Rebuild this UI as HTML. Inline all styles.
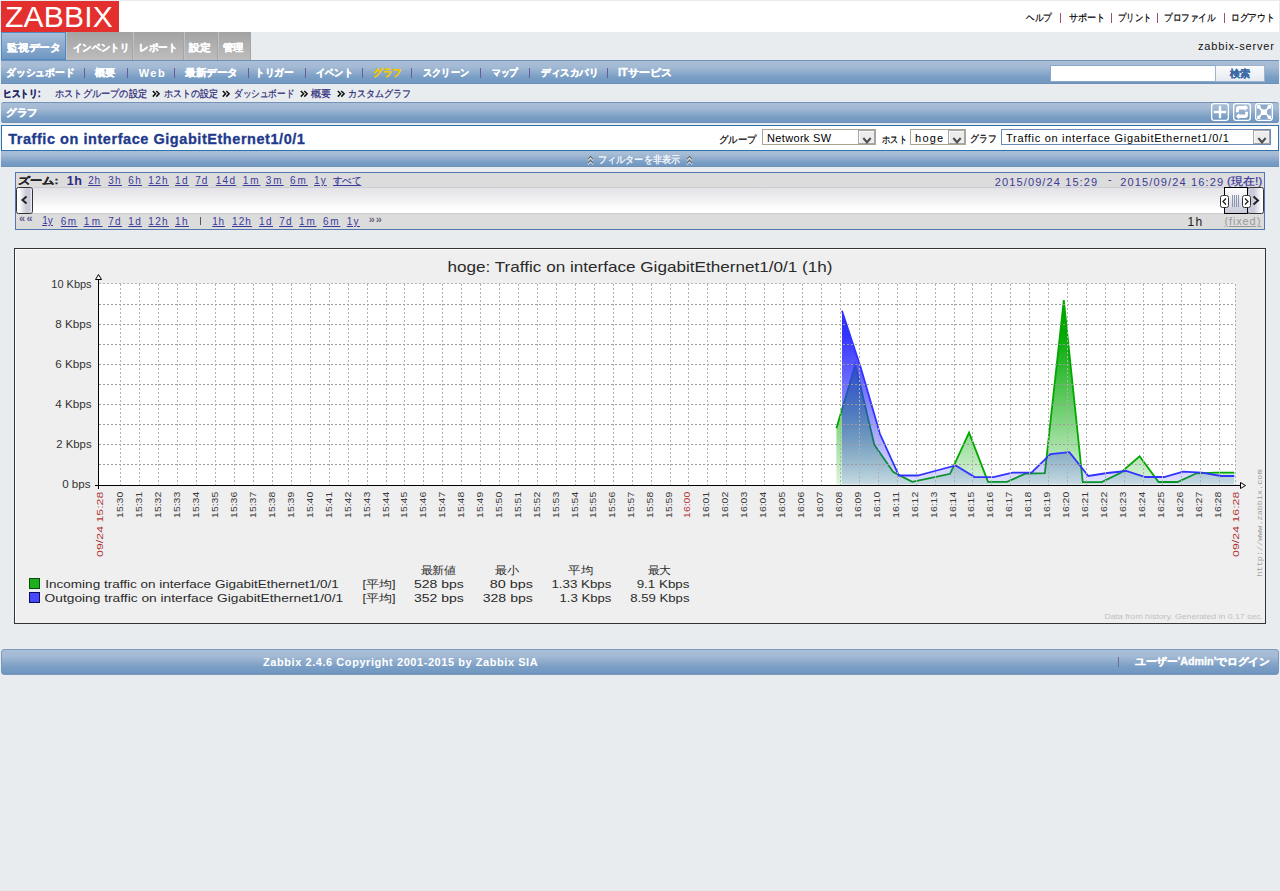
<!DOCTYPE html>
<html lang="ja">
<head>
<meta charset="utf-8">
<title>Zabbix graph</title>
<style>
*{box-sizing:border-box;margin:0;padding:0}
html,body{width:1280px;height:891px;overflow:hidden}
body{position:relative;background:#e9ecef;font-family:"Liberation Sans",sans-serif;font-size:11px;color:#000}
.a{position:absolute;white-space:nowrap}
.t{position:absolute;white-space:nowrap;line-height:1}
.bluebar{background:linear-gradient(#a9bed7,#a4bad4 25%,#7a9ec5 70%,#6f97c1);box-shadow:inset 0 -1px 0 #6f8fb5}
#hdr{left:1px;top:1px;width:1278px;height:31px;background:#fff}
#logo{left:1px;top:1px;width:118px;height:31px;background:#e3302f;color:#fff;font-size:30px;line-height:31px;padding-left:4px;letter-spacing:0.2px}
.gtab{top:32px;height:28px;background:linear-gradient(#a3a3a3,#bdbdbd);border-left:1px solid #c2c2c2;border-right:1px solid #a4a4a4}
.atab{top:32px;height:28px;background:linear-gradient(#a8bed8,#6f97c2);border:1px solid #4e8bc6}
#sub{left:1px;top:60px;width:1278px;height:24px;border-top:1px solid #7290b6}
#ghdr{left:1px;top:102px;width:1278px;height:21px;border-radius:3px;border-top:1px solid #7593b8}
#tbox{left:1px;top:125px;width:1278px;height:26px;background:#fff;border:1px solid #2f72b0}
#fbar{left:1px;top:151px;width:1278px;height:16px}
#tline{left:15px;top:172px;width:1250px;height:58px;border:1px solid #5577b0;background:#fff}
#footer{left:1px;top:649px;width:1278px;height:26px;border-radius:3px;border:1px solid #7b9abf}
#chart{position:absolute;left:14px;top:248px}
.gl{font-family:"Liberation Sans",sans-serif;font-size:10.5px;fill:#333}
.gx{font-family:"Liberation Sans",sans-serif;font-size:9.6px;fill:#3a3a3a}
.gx.red{fill:#b03a3a}
.wm{font-family:"Liberation Mono",monospace;font-size:8px;fill:#a0a0a0}
.gt{font-family:"Liberation Sans",sans-serif;font-size:14.5px;fill:#2a2a2a}
.lg{font-family:"Liberation Sans",sans-serif;font-size:10.6px;fill:#2a2a2a}
.gen{font-family:"Liberation Sans",sans-serif;font-size:8px;fill:#c0c0c0}
.sel{height:16px;background:#fff;border:1px solid #a8a690}
.sel .btn{position:absolute;right:0;top:0;width:17px;height:14px;background:#ececec;border:1px solid #a4a8ac;box-shadow:inset 1px 1px 0 #fafafa}
.sel .btn svg{position:absolute;left:3px;top:5px}
</style>
</head>
<body>
<div class="a" id="hdr"></div>
<div class="a" id="logo">ZABBIX</div>

<div class="a atab" style="left:1px;width:65px"></div>
<div class="a gtab" style="left:66px;width:67px"></div>
<div class="a gtab" style="left:133px;width:51px"></div>
<div class="a gtab" style="left:184px;width:34px"></div>
<div class="a gtab" style="left:218px;width:33px"></div>

<div class="a bluebar" id="sub"></div>
<div class="a" style="left:1050px;top:65px;width:166px;height:17px;background:#fff;border:1px solid #8aa6c8"></div>
<div class="a" style="left:1215px;top:65px;width:50px;height:17px;background:linear-gradient(#fbfbfb,#e6ebf1);border:1px solid #9db3cf"></div>

<div class="a bluebar" id="ghdr"></div>
<svg class="a" style="left:1211px;top:103px" width="62" height="18" viewBox="0 0 62 18">
<g fill="none" stroke="#fff" stroke-width="1.3">
<rect x="0.65" y="0.65" width="16.7" height="16.7" rx="2.5"/>
<rect x="22.65" y="0.65" width="16.7" height="16.7" rx="2.5"/>
<rect x="44.65" y="0.65" width="16.7" height="16.7" rx="2.5"/>
</g>
<g fill="#fff">
<rect x="2.8" y="7.8" width="12.4" height="2.4"/><rect x="7.8" y="2.8" width="2.4" height="12.4"/>
<path d="M25 9.2V6Q25 3 28 3H33.8V1.6L37.2 4.75L33.8 7.9V6.5H27.8V9.2Z"/>
<path d="M37 8.8V12Q37 15 34 15H28.2V16.4L24.8 13.25L28.2 10.1V11.5H34.2V8.8Z"/>
</g>
<g>
<clipPath id="fsc"><rect x="46.1" y="2" width="14" height="14"/></clipPath>
<rect x="46.2" y="2.1" width="13.8" height="13.8" fill="#fff"/>
<g clip-path="url(#fsc)" fill="#8eabcc">
<ellipse cx="53" cy="2" rx="3.8" ry="4.8"/>
<ellipse cx="53" cy="16" rx="3.8" ry="4.8" fill="#84a3c7"/>
<ellipse cx="46.1" cy="9.1" rx="3.8" ry="3.7"/>
<ellipse cx="60.1" cy="9.1" rx="4.3" ry="3.7"/>
</g>
<path d="M46.1 2L60.1 16M60.1 2L46.1 16" stroke="#fff" stroke-width="1"/>
<circle cx="53" cy="9.2" r="2.8" fill="#fff"/></g>
</g>
</svg>

<div class="a" id="tbox"></div>
<div class="a sel" style="left:762px;top:129px;width:114px"><div class="btn"><svg width="10" height="9" viewBox="0 0 10 9"><path d="M1.3 2L5 6.3L8.7 2" fill="none" stroke="#505050" stroke-width="2.1"/></svg></div></div>
<div class="a sel" style="left:910px;top:129px;width:56px"><div class="btn"><svg width="10" height="9" viewBox="0 0 10 9"><path d="M1.3 2L5 6.3L8.7 2" fill="none" stroke="#505050" stroke-width="2.1"/></svg></div></div>
<div class="a sel" style="left:1001px;top:129px;width:270px;border-color:#6a8ab8"><div class="btn"><svg width="10" height="9" viewBox="0 0 10 9"><path d="M1.3 2L5 6.3L8.7 2" fill="none" stroke="#505050" stroke-width="2.1"/></svg></div></div>

<div class="a bluebar" id="fbar"></div>
<svg class="a" style="left:587px;top:155px" width="7" height="10" viewBox="0 0 7 10"><path d="M0.8 4.5L3.5 1.5L6.2 4.5M0.8 8.5L3.5 5.5L6.2 8.5" fill="none" stroke="#f4f4f4" stroke-width="1.6" transform="translate(0 0.6)"/><path d="M0.8 4.5L3.5 1.5L6.2 4.5M0.8 8.5L3.5 5.5L6.2 8.5" fill="none" stroke="#555" stroke-width="1.1"/></svg>
<svg class="a" style="left:686px;top:155px" width="7" height="10" viewBox="0 0 7 10"><path d="M0.8 4.5L3.5 1.5L6.2 4.5M0.8 8.5L3.5 5.5L6.2 8.5" fill="none" stroke="#f4f4f4" stroke-width="1.6" transform="translate(0 0.6)"/><path d="M0.8 4.5L3.5 1.5L6.2 4.5M0.8 8.5L3.5 5.5L6.2 8.5" fill="none" stroke="#555" stroke-width="1.1"/></svg>

<div class="a" id="tline"></div>
<div class="a" style="left:16px;top:173px;width:1248px;height:15px;background:#dcdcdc;border-bottom:1px solid #cdcbd3"></div>
<div class="a" style="left:16px;top:188px;width:1248px;height:25px;background:linear-gradient(#e3e3e7,#ececef 35%,#fdfdfd 80%,#fff)"></div>
<div class="a" style="left:16px;top:213px;width:1248px;height:16px;background:#dcdcdc;border-top:1px solid #cdcbd3"></div>

<svg class="a" style="left:16px;top:187px" width="18" height="27" viewBox="0 0 18 27">
<defs><linearGradient id="lb" x1="0" y1="0" x2="1" y2="0"><stop offset="0" stop-color="#fff"/><stop offset="0.2" stop-color="#fafafc"/><stop offset="0.6" stop-color="#c9cbda"/><stop offset="0.85" stop-color="#c9cbda"/><stop offset="1" stop-color="#fff"/></linearGradient></defs>
<rect x="0.5" y="0.5" width="16" height="26" rx="2" fill="url(#lb)" stroke="#333"/>
<path d="M10.5 9.5L6.5 13L10.5 16.5" fill="none" stroke="#222" stroke-width="2"/>
</svg>
<svg class="a" style="left:1218px;top:187px" width="48" height="27" viewBox="1218 187 48 27">
<defs><linearGradient id="tb" x1="0" y1="0" x2="0" y2="1"><stop offset="0" stop-color="#fff"/><stop offset="0.35" stop-color="#f0f0f4"/><stop offset="1" stop-color="#c6c8d8"/></linearGradient>
<linearGradient id="rb" x1="0" y1="0" x2="1" y2="0"><stop offset="0" stop-color="#c9cbda"/><stop offset="0.4" stop-color="#c9cbda"/><stop offset="0.85" stop-color="#fafafc"/><stop offset="1" stop-color="#fff"/></linearGradient></defs>
<rect x="1247.5" y="187.5" width="16" height="26" rx="2" fill="url(#rb)" stroke="#333"/>
<path d="M1253.5 196.5L1258 200.5L1253.5 204.5" fill="none" stroke="#222" stroke-width="2"/>
<rect x="1224.5" y="187.5" width="23" height="26" fill="url(#tb)" stroke="#000"/>
<g stroke="#8a96ae" stroke-width="1"><path d="M1232.5 195V207M1234.5 195V207M1236.5 195V207M1238.5 195V207"/></g>
<rect x="1220.5" y="195.5" width="8" height="12" rx="2" fill="#fff" stroke="#333"/>
<rect x="1242.5" y="195.5" width="8" height="12" rx="2" fill="#fff" stroke="#333"/>
<path d="M1226 198.5L1223 201.5L1226 204.5" fill="none" stroke="#222" stroke-width="1.3"/>
<path d="M1245 198.5L1248 201.5L1245 204.5" fill="none" stroke="#222" stroke-width="1.3"/>
</svg>
<svg id="chart" width="1252" height="376" viewBox="14 248 1252 376">
<defs><linearGradient id="gg" gradientUnits="userSpaceOnUse" x1="0" y1="334" x2="0" y2="484"><stop offset="0" stop-color="#00AA00" stop-opacity="1"/><stop offset="1" stop-color="#00AA00" stop-opacity="0.134"/></linearGradient><linearGradient id="bg" gradientUnits="userSpaceOnUse" x1="0" y1="334" x2="0" y2="484"><stop offset="0" stop-color="#3333FF" stop-opacity="1"/><stop offset="1" stop-color="#3333FF" stop-opacity="0.134"/></linearGradient></defs>
<rect x="14.5" y="248.5" width="1251" height="375" fill="#efefef" stroke="#333" stroke-width="1"/>
<path d="M15.5 622.5V249.5H1264.5" fill="none" stroke="#fff" stroke-width="1"/>
<rect x="99" y="284" width="1136" height="201" fill="#fff"/>
<polygon points="836.4,484.5 836.4,428.3 855.35,364.5 874.3,444.7 893.25,472 912.2,481.8 931.15,477.8 950.1,473.8 969.05,432.6 988,481.8 1006.95,481.8 1025.9,473.5 1044.85,473.1 1063.8,300.1 1082.75,482.1 1101.7,482.1 1120.65,472.7 1139.6,456.2 1158.55,482 1177.5,482 1196.45,473.3 1215.4,472.7 1234.3,472.7 1234.3,484.5" fill="url(#gg)"/>
<polyline points="836.4,428.3 855.35,364.5 874.3,444.7 893.25,472 912.2,481.8 931.15,477.8 950.1,473.8 969.05,432.6 988,481.8 1006.95,481.8 1025.9,473.5 1044.85,473.1 1063.8,300.1 1082.75,482.1 1101.7,482.1 1120.65,472.7 1139.6,456.2 1158.55,482 1177.5,482 1196.45,473.3 1215.4,472.7 1234.3,472.7" fill="none" stroke="#00A800" stroke-width="1.8" stroke-linejoin="miter"/>
<polygon points="842,484.5 842,310.7 860.95,368.2 879.9,433.8 898.85,475.5 917.8,475.5 936.75,470.5 955.7,465.4 974.65,477.1 993.6,477.1 1012.55,472.7 1031.5,472.7 1050.45,454 1069.4,452.2 1088.35,476 1107.3,473 1126.25,471 1145.2,477 1164.15,477 1183.1,471.6 1202.05,472.7 1221,476 1234.3,476 1234.3,484.5" fill="url(#bg)"/>
<polyline points="842,310.7 860.95,368.2 879.9,433.8 898.85,475.5 917.8,475.5 936.75,470.5 955.7,465.4 974.65,477.1 993.6,477.1 1012.55,472.7 1031.5,472.7 1050.45,454 1069.4,452.2 1088.35,476 1107.3,473 1126.25,471 1145.2,477 1164.15,477 1183.1,471.6 1202.05,472.7 1221,476 1234.3,476" fill="none" stroke="#3333FF" stroke-width="1.8"/>
<line x1="99" y1="283.5" x2="1235" y2="283.5" stroke="#b8b8b8" stroke-dasharray="2,2"/>
<line x1="99" y1="304.5" x2="1235" y2="304.5" stroke="#9a9a9a" stroke-dasharray="2,2"/>
<line x1="99" y1="324.5" x2="1235" y2="324.5" stroke="#9a9a9a" stroke-dasharray="2,2"/>
<line x1="99" y1="344.5" x2="1235" y2="344.5" stroke="#9a9a9a" stroke-dasharray="2,2"/>
<line x1="99" y1="364.5" x2="1235" y2="364.5" stroke="#9a9a9a" stroke-dasharray="2,2"/>
<line x1="99" y1="384.5" x2="1235" y2="384.5" stroke="#9a9a9a" stroke-dasharray="2,2"/>
<line x1="99" y1="404.5" x2="1235" y2="404.5" stroke="#9a9a9a" stroke-dasharray="2,2"/>
<line x1="99" y1="424.5" x2="1235" y2="424.5" stroke="#9a9a9a" stroke-dasharray="2,2"/>
<line x1="99" y1="444.5" x2="1235" y2="444.5" stroke="#9a9a9a" stroke-dasharray="2,2"/>
<line x1="99" y1="464.5" x2="1235" y2="464.5" stroke="#9a9a9a" stroke-dasharray="2,2"/>
<line x1="120.5" y1="284" x2="120.5" y2="485" stroke="#b0b0b0" stroke-dasharray="2,2"/>
<line x1="139.5" y1="284" x2="139.5" y2="485" stroke="#b0b0b0" stroke-dasharray="2,2"/>
<line x1="158.5" y1="284" x2="158.5" y2="485" stroke="#b0b0b0" stroke-dasharray="2,2"/>
<line x1="177.5" y1="284" x2="177.5" y2="485" stroke="#b0b0b0" stroke-dasharray="2,2"/>
<line x1="196.5" y1="284" x2="196.5" y2="485" stroke="#b0b0b0" stroke-dasharray="2,2"/>
<line x1="215.5" y1="284" x2="215.5" y2="485" stroke="#b0b0b0" stroke-dasharray="2,2"/>
<line x1="234.5" y1="284" x2="234.5" y2="485" stroke="#b0b0b0" stroke-dasharray="2,2"/>
<line x1="253.5" y1="284" x2="253.5" y2="485" stroke="#b0b0b0" stroke-dasharray="2,2"/>
<line x1="272.5" y1="284" x2="272.5" y2="485" stroke="#b0b0b0" stroke-dasharray="2,2"/>
<line x1="291.5" y1="284" x2="291.5" y2="485" stroke="#b0b0b0" stroke-dasharray="2,2"/>
<line x1="310.5" y1="284" x2="310.5" y2="485" stroke="#b0b0b0" stroke-dasharray="2,2"/>
<line x1="329.5" y1="284" x2="329.5" y2="485" stroke="#b0b0b0" stroke-dasharray="2,2"/>
<line x1="348.5" y1="284" x2="348.5" y2="485" stroke="#b0b0b0" stroke-dasharray="2,2"/>
<line x1="367.5" y1="284" x2="367.5" y2="485" stroke="#b0b0b0" stroke-dasharray="2,2"/>
<line x1="386.5" y1="284" x2="386.5" y2="485" stroke="#b0b0b0" stroke-dasharray="2,2"/>
<line x1="404.5" y1="284" x2="404.5" y2="485" stroke="#b0b0b0" stroke-dasharray="2,2"/>
<line x1="423.5" y1="284" x2="423.5" y2="485" stroke="#b0b0b0" stroke-dasharray="2,2"/>
<line x1="442.5" y1="284" x2="442.5" y2="485" stroke="#b0b0b0" stroke-dasharray="2,2"/>
<line x1="461.5" y1="284" x2="461.5" y2="485" stroke="#b0b0b0" stroke-dasharray="2,2"/>
<line x1="480.5" y1="284" x2="480.5" y2="485" stroke="#b0b0b0" stroke-dasharray="2,2"/>
<line x1="499.5" y1="284" x2="499.5" y2="485" stroke="#b0b0b0" stroke-dasharray="2,2"/>
<line x1="518.5" y1="284" x2="518.5" y2="485" stroke="#b0b0b0" stroke-dasharray="2,2"/>
<line x1="537.5" y1="284" x2="537.5" y2="485" stroke="#b0b0b0" stroke-dasharray="2,2"/>
<line x1="556.5" y1="284" x2="556.5" y2="485" stroke="#b0b0b0" stroke-dasharray="2,2"/>
<line x1="575.5" y1="284" x2="575.5" y2="485" stroke="#b0b0b0" stroke-dasharray="2,2"/>
<line x1="594.5" y1="284" x2="594.5" y2="485" stroke="#b0b0b0" stroke-dasharray="2,2"/>
<line x1="613.5" y1="284" x2="613.5" y2="485" stroke="#b0b0b0" stroke-dasharray="2,2"/>
<line x1="632.5" y1="284" x2="632.5" y2="485" stroke="#b0b0b0" stroke-dasharray="2,2"/>
<line x1="651.5" y1="284" x2="651.5" y2="485" stroke="#b0b0b0" stroke-dasharray="2,2"/>
<line x1="670.5" y1="284" x2="670.5" y2="485" stroke="#b0b0b0" stroke-dasharray="2,2"/>
<line x1="688.5" y1="284" x2="688.5" y2="485" stroke="#b0b0b0" stroke-dasharray="2,2"/>
<line x1="707.5" y1="284" x2="707.5" y2="485" stroke="#b0b0b0" stroke-dasharray="2,2"/>
<line x1="726.5" y1="284" x2="726.5" y2="485" stroke="#b0b0b0" stroke-dasharray="2,2"/>
<line x1="745.5" y1="284" x2="745.5" y2="485" stroke="#b0b0b0" stroke-dasharray="2,2"/>
<line x1="764.5" y1="284" x2="764.5" y2="485" stroke="#b0b0b0" stroke-dasharray="2,2"/>
<line x1="783.5" y1="284" x2="783.5" y2="485" stroke="#b0b0b0" stroke-dasharray="2,2"/>
<line x1="802.5" y1="284" x2="802.5" y2="485" stroke="#b0b0b0" stroke-dasharray="2,2"/>
<line x1="821.5" y1="284" x2="821.5" y2="485" stroke="#b0b0b0" stroke-dasharray="2,2"/>
<line x1="840.5" y1="284" x2="840.5" y2="485" stroke="#b0b0b0" stroke-dasharray="2,2"/>
<line x1="859.5" y1="284" x2="859.5" y2="485" stroke="#b0b0b0" stroke-dasharray="2,2"/>
<line x1="878.5" y1="284" x2="878.5" y2="485" stroke="#b0b0b0" stroke-dasharray="2,2"/>
<line x1="897.5" y1="284" x2="897.5" y2="485" stroke="#b0b0b0" stroke-dasharray="2,2"/>
<line x1="916.5" y1="284" x2="916.5" y2="485" stroke="#b0b0b0" stroke-dasharray="2,2"/>
<line x1="935.5" y1="284" x2="935.5" y2="485" stroke="#b0b0b0" stroke-dasharray="2,2"/>
<line x1="954.5" y1="284" x2="954.5" y2="485" stroke="#b0b0b0" stroke-dasharray="2,2"/>
<line x1="972.5" y1="284" x2="972.5" y2="485" stroke="#b0b0b0" stroke-dasharray="2,2"/>
<line x1="991.5" y1="284" x2="991.5" y2="485" stroke="#b0b0b0" stroke-dasharray="2,2"/>
<line x1="1010.5" y1="284" x2="1010.5" y2="485" stroke="#b0b0b0" stroke-dasharray="2,2"/>
<line x1="1029.5" y1="284" x2="1029.5" y2="485" stroke="#b0b0b0" stroke-dasharray="2,2"/>
<line x1="1048.5" y1="284" x2="1048.5" y2="485" stroke="#b0b0b0" stroke-dasharray="2,2"/>
<line x1="1067.5" y1="284" x2="1067.5" y2="485" stroke="#b0b0b0" stroke-dasharray="2,2"/>
<line x1="1086.5" y1="284" x2="1086.5" y2="485" stroke="#b0b0b0" stroke-dasharray="2,2"/>
<line x1="1105.5" y1="284" x2="1105.5" y2="485" stroke="#b0b0b0" stroke-dasharray="2,2"/>
<line x1="1124.5" y1="284" x2="1124.5" y2="485" stroke="#b0b0b0" stroke-dasharray="2,2"/>
<line x1="1143.5" y1="284" x2="1143.5" y2="485" stroke="#b0b0b0" stroke-dasharray="2,2"/>
<line x1="1162.5" y1="284" x2="1162.5" y2="485" stroke="#b0b0b0" stroke-dasharray="2,2"/>
<line x1="1181.5" y1="284" x2="1181.5" y2="485" stroke="#b0b0b0" stroke-dasharray="2,2"/>
<line x1="1200.5" y1="284" x2="1200.5" y2="485" stroke="#b0b0b0" stroke-dasharray="2,2"/>
<line x1="1219.5" y1="284" x2="1219.5" y2="485" stroke="#b0b0b0" stroke-dasharray="2,2"/>
<line x1="1235.5" y1="284" x2="1235.5" y2="485" stroke="#b0b0b0" stroke-dasharray="2,2"/>
<path d="M98.5 279V489M95 485.5H1240" stroke="#000" stroke-width="1" fill="none"/>
<path d="M95.5 279.5L98.5 274.5L101.5 279.5Z" fill="#fff" stroke="#000" stroke-width="1"/>
<path d="M1240.5 482.5L1245.5 485.5L1240.5 488.5Z" fill="#fff" stroke="#000" stroke-width="1"/>
<text x="51.3" y="288" textLength="40.3" lengthAdjust="spacingAndGlyphs" class="gl">10 Kbps</text>
<text x="55.3" y="328" textLength="36.3" lengthAdjust="spacingAndGlyphs" class="gl">8 Kbps</text>
<text x="55.3" y="368" textLength="36.3" lengthAdjust="spacingAndGlyphs" class="gl">6 Kbps</text>
<text x="55.3" y="408" textLength="36.3" lengthAdjust="spacingAndGlyphs" class="gl">4 Kbps</text>
<text x="56.2" y="448" textLength="35.4" lengthAdjust="spacingAndGlyphs" class="gl">2 Kbps</text>
<text x="62.2" y="488" textLength="28.4" lengthAdjust="spacingAndGlyphs" class="gl">0 bps</text>
<text transform="translate(123.1 491.8) rotate(-90)" x="-26.1" y="0" textLength="26.1" lengthAdjust="spacingAndGlyphs" class="gx">15:30</text>
<text transform="translate(142.07 491.8) rotate(-90)" x="-26.1" y="0" textLength="26.1" lengthAdjust="spacingAndGlyphs" class="gx">15:31</text>
<text transform="translate(161.05 491.8) rotate(-90)" x="-26.1" y="0" textLength="26.1" lengthAdjust="spacingAndGlyphs" class="gx">15:32</text>
<text transform="translate(180.03 491.8) rotate(-90)" x="-26.1" y="0" textLength="26.1" lengthAdjust="spacingAndGlyphs" class="gx">15:33</text>
<text transform="translate(199 491.8) rotate(-90)" x="-26.1" y="0" textLength="26.1" lengthAdjust="spacingAndGlyphs" class="gx">15:34</text>
<text transform="translate(217.97 491.8) rotate(-90)" x="-26.1" y="0" textLength="26.1" lengthAdjust="spacingAndGlyphs" class="gx">15:35</text>
<text transform="translate(236.95 491.8) rotate(-90)" x="-26.1" y="0" textLength="26.1" lengthAdjust="spacingAndGlyphs" class="gx">15:36</text>
<text transform="translate(255.93 491.8) rotate(-90)" x="-26.1" y="0" textLength="26.1" lengthAdjust="spacingAndGlyphs" class="gx">15:37</text>
<text transform="translate(274.9 491.8) rotate(-90)" x="-26.1" y="0" textLength="26.1" lengthAdjust="spacingAndGlyphs" class="gx">15:38</text>
<text transform="translate(293.88 491.8) rotate(-90)" x="-26.1" y="0" textLength="26.1" lengthAdjust="spacingAndGlyphs" class="gx">15:39</text>
<text transform="translate(312.85 491.8) rotate(-90)" x="-26.1" y="0" textLength="26.1" lengthAdjust="spacingAndGlyphs" class="gx">15:40</text>
<text transform="translate(331.83 491.8) rotate(-90)" x="-26.1" y="0" textLength="26.1" lengthAdjust="spacingAndGlyphs" class="gx">15:41</text>
<text transform="translate(350.8 491.8) rotate(-90)" x="-26.1" y="0" textLength="26.1" lengthAdjust="spacingAndGlyphs" class="gx">15:42</text>
<text transform="translate(369.78 491.8) rotate(-90)" x="-26.1" y="0" textLength="26.1" lengthAdjust="spacingAndGlyphs" class="gx">15:43</text>
<text transform="translate(388.75 491.8) rotate(-90)" x="-26.1" y="0" textLength="26.1" lengthAdjust="spacingAndGlyphs" class="gx">15:44</text>
<text transform="translate(406.73 491.8) rotate(-90)" x="-26.1" y="0" textLength="26.1" lengthAdjust="spacingAndGlyphs" class="gx">15:45</text>
<text transform="translate(425.7 491.8) rotate(-90)" x="-26.1" y="0" textLength="26.1" lengthAdjust="spacingAndGlyphs" class="gx">15:46</text>
<text transform="translate(444.68 491.8) rotate(-90)" x="-26.1" y="0" textLength="26.1" lengthAdjust="spacingAndGlyphs" class="gx">15:47</text>
<text transform="translate(463.65 491.8) rotate(-90)" x="-26.1" y="0" textLength="26.1" lengthAdjust="spacingAndGlyphs" class="gx">15:48</text>
<text transform="translate(482.62 491.8) rotate(-90)" x="-26.1" y="0" textLength="26.1" lengthAdjust="spacingAndGlyphs" class="gx">15:49</text>
<text transform="translate(501.6 491.8) rotate(-90)" x="-26.1" y="0" textLength="26.1" lengthAdjust="spacingAndGlyphs" class="gx">15:50</text>
<text transform="translate(520.58 491.8) rotate(-90)" x="-26.1" y="0" textLength="26.1" lengthAdjust="spacingAndGlyphs" class="gx">15:51</text>
<text transform="translate(539.55 491.8) rotate(-90)" x="-26.1" y="0" textLength="26.1" lengthAdjust="spacingAndGlyphs" class="gx">15:52</text>
<text transform="translate(558.52 491.8) rotate(-90)" x="-26.1" y="0" textLength="26.1" lengthAdjust="spacingAndGlyphs" class="gx">15:53</text>
<text transform="translate(577.5 491.8) rotate(-90)" x="-26.1" y="0" textLength="26.1" lengthAdjust="spacingAndGlyphs" class="gx">15:54</text>
<text transform="translate(596.48 491.8) rotate(-90)" x="-26.1" y="0" textLength="26.1" lengthAdjust="spacingAndGlyphs" class="gx">15:55</text>
<text transform="translate(615.45 491.8) rotate(-90)" x="-26.1" y="0" textLength="26.1" lengthAdjust="spacingAndGlyphs" class="gx">15:56</text>
<text transform="translate(634.43 491.8) rotate(-90)" x="-26.1" y="0" textLength="26.1" lengthAdjust="spacingAndGlyphs" class="gx">15:57</text>
<text transform="translate(653.4 491.8) rotate(-90)" x="-26.1" y="0" textLength="26.1" lengthAdjust="spacingAndGlyphs" class="gx">15:58</text>
<text transform="translate(672.38 491.8) rotate(-90)" x="-26.1" y="0" textLength="26.1" lengthAdjust="spacingAndGlyphs" class="gx">15:59</text>
<text transform="translate(690.35 491.8) rotate(-90)" x="-26.1" y="0" textLength="26.1" lengthAdjust="spacingAndGlyphs" class="gx red">16:00</text>
<text transform="translate(709.33 491.8) rotate(-90)" x="-26.1" y="0" textLength="26.1" lengthAdjust="spacingAndGlyphs" class="gx">16:01</text>
<text transform="translate(728.3 491.8) rotate(-90)" x="-26.1" y="0" textLength="26.1" lengthAdjust="spacingAndGlyphs" class="gx">16:02</text>
<text transform="translate(747.27 491.8) rotate(-90)" x="-26.1" y="0" textLength="26.1" lengthAdjust="spacingAndGlyphs" class="gx">16:03</text>
<text transform="translate(766.25 491.8) rotate(-90)" x="-26.1" y="0" textLength="26.1" lengthAdjust="spacingAndGlyphs" class="gx">16:04</text>
<text transform="translate(785.23 491.8) rotate(-90)" x="-26.1" y="0" textLength="26.1" lengthAdjust="spacingAndGlyphs" class="gx">16:05</text>
<text transform="translate(804.2 491.8) rotate(-90)" x="-26.1" y="0" textLength="26.1" lengthAdjust="spacingAndGlyphs" class="gx">16:06</text>
<text transform="translate(823.18 491.8) rotate(-90)" x="-26.1" y="0" textLength="26.1" lengthAdjust="spacingAndGlyphs" class="gx">16:07</text>
<text transform="translate(842.15 491.8) rotate(-90)" x="-26.1" y="0" textLength="26.1" lengthAdjust="spacingAndGlyphs" class="gx">16:08</text>
<text transform="translate(861.12 491.8) rotate(-90)" x="-26.1" y="0" textLength="26.1" lengthAdjust="spacingAndGlyphs" class="gx">16:09</text>
<text transform="translate(880.1 491.8) rotate(-90)" x="-26.1" y="0" textLength="26.1" lengthAdjust="spacingAndGlyphs" class="gx">16:10</text>
<text transform="translate(899.08 491.8) rotate(-90)" x="-26.1" y="0" textLength="26.1" lengthAdjust="spacingAndGlyphs" class="gx">16:11</text>
<text transform="translate(918.05 491.8) rotate(-90)" x="-26.1" y="0" textLength="26.1" lengthAdjust="spacingAndGlyphs" class="gx">16:12</text>
<text transform="translate(937.02 491.8) rotate(-90)" x="-26.1" y="0" textLength="26.1" lengthAdjust="spacingAndGlyphs" class="gx">16:13</text>
<text transform="translate(956 491.8) rotate(-90)" x="-26.1" y="0" textLength="26.1" lengthAdjust="spacingAndGlyphs" class="gx">16:14</text>
<text transform="translate(973.98 491.8) rotate(-90)" x="-26.1" y="0" textLength="26.1" lengthAdjust="spacingAndGlyphs" class="gx">16:15</text>
<text transform="translate(992.95 491.8) rotate(-90)" x="-26.1" y="0" textLength="26.1" lengthAdjust="spacingAndGlyphs" class="gx">16:16</text>
<text transform="translate(1011.93 491.8) rotate(-90)" x="-26.1" y="0" textLength="26.1" lengthAdjust="spacingAndGlyphs" class="gx">16:17</text>
<text transform="translate(1030.9 491.8) rotate(-90)" x="-26.1" y="0" textLength="26.1" lengthAdjust="spacingAndGlyphs" class="gx">16:18</text>
<text transform="translate(1049.88 491.8) rotate(-90)" x="-26.1" y="0" textLength="26.1" lengthAdjust="spacingAndGlyphs" class="gx">16:19</text>
<text transform="translate(1068.85 491.8) rotate(-90)" x="-26.1" y="0" textLength="26.1" lengthAdjust="spacingAndGlyphs" class="gx">16:20</text>
<text transform="translate(1087.82 491.8) rotate(-90)" x="-26.1" y="0" textLength="26.1" lengthAdjust="spacingAndGlyphs" class="gx">16:21</text>
<text transform="translate(1106.8 491.8) rotate(-90)" x="-26.1" y="0" textLength="26.1" lengthAdjust="spacingAndGlyphs" class="gx">16:22</text>
<text transform="translate(1125.77 491.8) rotate(-90)" x="-26.1" y="0" textLength="26.1" lengthAdjust="spacingAndGlyphs" class="gx">16:23</text>
<text transform="translate(1144.75 491.8) rotate(-90)" x="-26.1" y="0" textLength="26.1" lengthAdjust="spacingAndGlyphs" class="gx">16:24</text>
<text transform="translate(1163.72 491.8) rotate(-90)" x="-26.1" y="0" textLength="26.1" lengthAdjust="spacingAndGlyphs" class="gx">16:25</text>
<text transform="translate(1182.7 491.8) rotate(-90)" x="-26.1" y="0" textLength="26.1" lengthAdjust="spacingAndGlyphs" class="gx">16:26</text>
<text transform="translate(1201.67 491.8) rotate(-90)" x="-26.1" y="0" textLength="26.1" lengthAdjust="spacingAndGlyphs" class="gx">16:27</text>
<text transform="translate(1220.65 491.8) rotate(-90)" x="-26.1" y="0" textLength="26.1" lengthAdjust="spacingAndGlyphs" class="gx">16:28</text>
<text transform="translate(103.4 491.7) rotate(-90)" x="-65.2" y="0" textLength="65.2" lengthAdjust="spacingAndGlyphs" class="gx red">09/24 15:28</text>
<text transform="translate(1238.6 491.7) rotate(-90)" x="-65.2" y="0" textLength="65.2" lengthAdjust="spacingAndGlyphs" class="gx red">09/24 16:28</text>
<text transform="translate(1262.3 469.5) rotate(-90)" x="-107" y="0" textLength="107" lengthAdjust="spacingAndGlyphs" class="wm">http://www.zabbix.com</text>
<text x="447.5" y="272.3" textLength="385" lengthAdjust="spacingAndGlyphs" class="gt">hoge: Traffic on interface GigabitEthernet1/0/1 (1h)</text>
<rect x="29.5" y="578.5" width="10" height="10" fill="#1eaf1e" stroke="#0b4a0b" stroke-width="1"/>
<rect x="29.5" y="592.5" width="10" height="10" fill="#4848ff" stroke="#0c0c5a" stroke-width="1"/>
<text x="45.3" y="588" textLength="293.6" lengthAdjust="spacingAndGlyphs" class="lg">Incoming traffic on interface GigabitEthernet1/0/1</text>
<text x="44.6" y="602" textLength="298.6" lengthAdjust="spacingAndGlyphs" class="lg">Outgoing traffic on interface GigabitEthernet1/0/1</text>
<text x="362.4" y="588" textLength="33.1" lengthAdjust="spacingAndGlyphs" class="lg">[平均]</text>
<text x="362.4" y="602" textLength="33.1" lengthAdjust="spacingAndGlyphs" class="lg">[平均]</text>
<text x="414" y="588" textLength="49.8" lengthAdjust="spacingAndGlyphs" class="lg">528 bps</text>
<text x="489.7" y="588" textLength="43.2" lengthAdjust="spacingAndGlyphs" class="lg">80 bps</text>
<text x="551.4" y="588" textLength="60" lengthAdjust="spacingAndGlyphs" class="lg">1.33 Kbps</text>
<text x="636.7" y="588" textLength="52.8" lengthAdjust="spacingAndGlyphs" class="lg">9.1 Kbps</text>
<text x="414" y="602" textLength="49.8" lengthAdjust="spacingAndGlyphs" class="lg">352 bps</text>
<text x="482.7" y="602" textLength="50.2" lengthAdjust="spacingAndGlyphs" class="lg">328 bps</text>
<text x="559.5" y="602" textLength="51.9" lengthAdjust="spacingAndGlyphs" class="lg">1.3 Kbps</text>
<text x="630.3" y="602" textLength="59.2" lengthAdjust="spacingAndGlyphs" class="lg">8.59 Kbps</text>
<text x="420.5" y="574" textLength="35.8" lengthAdjust="spacingAndGlyphs" class="lg">最新値</text>
<text x="494.5" y="574" textLength="24.3" lengthAdjust="spacingAndGlyphs" class="lg">最小</text>
<text x="568.2" y="574" textLength="24.9" lengthAdjust="spacingAndGlyphs" class="lg">平均</text>
<text x="647.5" y="574" textLength="23.7" lengthAdjust="spacingAndGlyphs" class="lg">最大</text>
<text x="1104.5" y="619" textLength="158.5" lengthAdjust="spacingAndGlyphs" class="gen">Data from history. Generated in 0.17 sec.</text>
</svg>

<div class="a bluebar" id="footer"></div>

<div class="t ct" id="h1" style="left:1026px;top:13px;font-size:10px;font-weight:normal;color:#000;letter-spacing:0px;;transform:scaleX(0.86);transform-origin:0 0;-webkit-text-stroke:0.22px #000;">ヘルプ</div>
<div class="t ct" id="h2" style="left:1069.2px;top:13px;font-size:10px;font-weight:normal;color:#000;letter-spacing:0px;;transform:scaleX(0.91);transform-origin:0 0;-webkit-text-stroke:0.22px #000;">サポート</div>
<div class="t ct" id="h3" style="left:1118.1px;top:13px;font-size:10px;font-weight:normal;color:#000;letter-spacing:0px;;transform:scaleX(0.84);transform-origin:0 0;-webkit-text-stroke:0.22px #000;">プリント</div>
<div class="t ct" id="h4" style="left:1164.1px;top:13px;font-size:10px;font-weight:normal;color:#000;letter-spacing:0px;;transform:scaleX(0.86);transform-origin:0 0;-webkit-text-stroke:0.22px #000;">プロファイル</div>
<div class="t ct" id="h5" style="left:1231.1px;top:13px;font-size:10px;font-weight:normal;color:#000;letter-spacing:0px;;transform:scaleX(0.87);transform-origin:0 0;-webkit-text-stroke:0.22px #000;">ログアウト</div>
<div class="t ct" id="tb1" style="left:6.7px;top:43px;font-size:10px;font-weight:bold;color:#fff;letter-spacing:0px;;transform:scaleX(1.08);transform-origin:0 0;-webkit-text-stroke:0.3px #fff;">監視データ</div>
<div class="t ct" id="tb2" style="left:73.1px;top:43px;font-size:10px;font-weight:bold;color:#fff;letter-spacing:0px;;transform:scaleX(0.93);transform-origin:0 0;-webkit-text-stroke:0.3px #fff;">インベントリ</div>
<div class="t ct" id="tb3" style="left:138.9px;top:43px;font-size:10px;font-weight:bold;color:#fff;letter-spacing:0px;;transform:scaleX(0.95);transform-origin:0 0;-webkit-text-stroke:0.3px #fff;">レポート</div>
<div class="t ct" id="tb4" style="left:188.5px;top:43px;font-size:10px;font-weight:bold;color:#fff;letter-spacing:0px;;transform:scaleX(1.08);transform-origin:0 0;-webkit-text-stroke:0.3px #fff;">設定</div>
<div class="t ct" id="tb5" style="left:222.8px;top:43px;font-size:10px;font-weight:bold;color:#fff;letter-spacing:0px;;transform:scaleX(1.03);transform-origin:0 0;-webkit-text-stroke:0.3px #fff;">管理</div>
<div class="t ct" id="srv" style="left:1198px;top:41px;font-size:11px;font-weight:normal;color:#111;letter-spacing:0.83px;;">zabbix-server</div>
<div class="t ct" id="s1" style="left:5.7px;top:68px;font-size:10px;font-weight:bold;color:#fff;letter-spacing:0px;;transform:scaleX(0.98);transform-origin:0 0;-webkit-text-stroke:0.3px #fff;">ダッシュボード</div>
<div class="t ct" id="s2" style="left:94.9px;top:68px;font-size:10px;font-weight:bold;color:#fff;letter-spacing:0px;;transform:scaleX(1.02);transform-origin:0 0;-webkit-text-stroke:0.3px #fff;">概要</div>
<div class="t ct" id="s3" style="left:138.79px;top:68px;font-size:11px;font-weight:bold;color:#fff;letter-spacing:1.41px;;">Web</div>
<div class="t ct" id="s4" style="left:184.6px;top:68px;font-size:10px;font-weight:bold;color:#fff;letter-spacing:0px;;transform:scaleX(1.06);transform-origin:0 0;-webkit-text-stroke:0.3px #fff;">最新データ</div>
<div class="t ct" id="s5" style="left:254.9px;top:68px;font-size:10px;font-weight:bold;color:#fff;letter-spacing:0px;;transform:scaleX(0.96);transform-origin:0 0;-webkit-text-stroke:0.3px #fff;">トリガー</div>
<div class="t ct" id="s6" style="left:316px;top:68px;font-size:10px;font-weight:bold;color:#fff;letter-spacing:0px;;transform:scaleX(0.92);transform-origin:0 0;-webkit-text-stroke:0.3px #fff;">イベント</div>
<div class="t ct" id="s7" style="left:372.5px;top:68px;font-size:10px;font-weight:bold;color:#f2c800;letter-spacing:0px;;transform:scaleX(0.97);transform-origin:0 0;-webkit-text-stroke:0.3px #f2c800;">グラフ</div>
<div class="t ct" id="s8" style="left:422.5px;top:68px;font-size:10px;font-weight:bold;color:#fff;letter-spacing:0px;;transform:scaleX(0.92);transform-origin:0 0;-webkit-text-stroke:0.3px #fff;">スクリーン</div>
<div class="t ct" id="s9" style="left:491.7px;top:68px;font-size:10px;font-weight:bold;color:#fff;letter-spacing:0px;;transform:scaleX(0.87);transform-origin:0 0;-webkit-text-stroke:0.3px #fff;">マップ</div>
<div class="t ct" id="s10" style="left:540.6px;top:68px;font-size:10px;font-weight:bold;color:#fff;letter-spacing:0px;;transform:scaleX(0.96);transform-origin:0 0;-webkit-text-stroke:0.3px #fff;">ディスカバリ</div>
<div class="t ct" id="s11" style="left:618.3px;top:68px;font-size:10px;font-weight:bold;color:#fff;letter-spacing:0px;;transform:scaleX(1.1);transform-origin:0 0;-webkit-text-stroke:0.3px #fff;">ITサービス</div>
<div class="t ct" id="srch" style="left:1230px;top:69px;font-size:10px;font-weight:bold;color:#3c6aa6;letter-spacing:0px;;transform:scaleX(1.01);transform-origin:0 0;-webkit-text-stroke:0.3px #3c6aa6;">検索</div>
<div class="t ct" id="hi0" style="left:2.9px;top:89px;font-size:10px;font-weight:bold;color:#26266a;letter-spacing:0px;;transform:scaleX(0.87);transform-origin:0 0;-webkit-text-stroke:0.3px #26266a;">ヒストリ:</div>
<div class="t ct" id="hi1" style="left:55.3px;top:89px;font-size:10px;font-weight:normal;color:#2a2a78;letter-spacing:0px;;transform:scaleX(0.92);transform-origin:0 0;-webkit-text-stroke:0.22px #2a2a78;">ホストグループの設定</div>
<div class="t ct" id="hi2" style="left:164.1px;top:89px;font-size:10px;font-weight:normal;color:#2a2a78;letter-spacing:0px;;transform:scaleX(0.9);transform-origin:0 0;-webkit-text-stroke:0.22px #2a2a78;">ホストの設定</div>
<div class="t ct" id="hi3" style="left:234px;top:89px;font-size:10px;font-weight:normal;color:#2a2a78;letter-spacing:0px;;transform:scaleX(0.86);transform-origin:0 0;-webkit-text-stroke:0.22px #2a2a78;">ダッシュボード</div>
<div class="t ct" id="hi4" style="left:311.4px;top:89px;font-size:10px;font-weight:normal;color:#2a2a78;letter-spacing:0px;;transform:scaleX(1.01);transform-origin:0 0;-webkit-text-stroke:0.22px #2a2a78;">概要</div>
<div class="t ct" id="hi5" style="left:347.5px;top:89px;font-size:10px;font-weight:normal;color:#2a2a78;letter-spacing:0px;;transform:scaleX(0.9);transform-origin:0 0;-webkit-text-stroke:0.22px #2a2a78;">カスタムグラフ</div>
<div class="t ct" id="gh" style="left:6px;top:108px;font-size:10px;font-weight:bold;color:#fff;letter-spacing:0px;;transform:scaleX(1.05);transform-origin:0 0;-webkit-text-stroke:0.3px #fff;">グラフ</div>
<div class="t ct" id="tt" style="left:8.16px;top:132px;font-size:14.5px;font-weight:bold;color:#213a8c;letter-spacing:0.55px;-webkit-text-stroke:0.3px #213a8c;">Traffic on interface GigabitEthernet1/0/1</div>
<div class="t ct" id="fl1" style="left:719.1px;top:135px;font-size:10px;font-weight:normal;color:#000;letter-spacing:0px;;transform:scaleX(0.94);transform-origin:0 0;-webkit-text-stroke:0.22px #000;">グループ</div>
<div class="t ct" id="fs1" style="left:767.05px;top:133px;font-size:11px;font-weight:normal;color:#000;letter-spacing:0.33px;;">Network SW</div>
<div class="t ct" id="fl2" style="left:882px;top:135px;font-size:10px;font-weight:normal;color:#000;letter-spacing:0px;;transform:scaleX(0.83);transform-origin:0 0;-webkit-text-stroke:0.22px #000;">ホスト</div>
<div class="t ct" id="fs2" style="left:915.1px;top:133px;font-size:11px;font-weight:normal;color:#000;letter-spacing:1.22px;;">hoge</div>
<div class="t ct" id="fl3" style="left:969.9px;top:134px;font-size:10px;font-weight:normal;color:#000;letter-spacing:0px;;transform:scaleX(0.88);transform-origin:0 0;-webkit-text-stroke:0.22px #000;">グラフ</div>
<div class="t ct" id="fs3" style="left:1006.02px;top:133px;font-size:11px;font-weight:normal;color:#000;letter-spacing:0.71px;;">Traffic on interface GigabitEthernet1/0/1</div>
<div class="t ct" id="fb" style="left:598.1px;top:155px;font-size:10px;font-weight:normal;color:#fff;letter-spacing:0px;;transform:scaleX(0.91);transform-origin:0 0;-webkit-text-stroke:0.22px #fff;">フィルターを非表示</div>
<div class="t ct" id="z0" style="left:18px;top:176px;font-size:9.5px;font-weight:bold;color:#222;letter-spacing:0px;;transform:scaleX(1.22);transform-origin:0 0;-webkit-text-stroke:0.3px #222;">ズーム:</div>
<div class="t ct" id="z1" style="left:66.84px;top:175px;font-size:12.5px;font-weight:bold;color:#2a2a80;letter-spacing:0.38px;;">1h</div>
<div class="t ct" id="z2" style="left:88.21px;top:176px;font-size:10px;font-weight:normal;color:#3a3a9a;letter-spacing:0.72px;text-decoration:underline;">2h</div>
<div class="t ct" id="z3" style="left:108.16px;top:176px;font-size:10px;font-weight:normal;color:#3a3a9a;letter-spacing:1.37px;text-decoration:underline;">3h</div>
<div class="t ct" id="z4" style="left:128.37px;top:176px;font-size:10px;font-weight:normal;color:#3a3a9a;letter-spacing:1.26px;text-decoration:underline;">6h</div>
<div class="t ct" id="z5" style="left:148.37px;top:176px;font-size:10px;font-weight:normal;color:#3a3a9a;letter-spacing:1.3px;text-decoration:underline;">12h</div>
<div class="t ct" id="z6" style="left:175px;top:176px;font-size:10px;font-weight:normal;color:#3a3a9a;letter-spacing:1.43px;text-decoration:underline;">1d</div>
<div class="t ct" id="z7" style="left:195.37px;top:176px;font-size:10px;font-weight:normal;color:#3a3a9a;letter-spacing:0.81px;text-decoration:underline;">7d</div>
<div class="t ct" id="z8" style="left:215.74px;top:176px;font-size:10px;font-weight:normal;color:#3a3a9a;letter-spacing:1.29px;text-decoration:underline;">14d</div>
<div class="t ct" id="z9" style="left:242.74px;top:176px;font-size:10px;font-weight:normal;color:#3a3a9a;letter-spacing:1.89px;text-decoration:underline;">1m</div>
<div class="t ct" id="z10" style="left:265.63px;top:176px;font-size:10px;font-weight:normal;color:#3a3a9a;letter-spacing:2.07px;text-decoration:underline;">3m</div>
<div class="t ct" id="z11" style="left:290px;top:176px;font-size:10px;font-weight:normal;color:#3a3a9a;letter-spacing:2px;text-decoration:underline;">6m</div>
<div class="t ct" id="z12" style="left:314px;top:176px;font-size:10px;font-weight:normal;color:#3a3a9a;letter-spacing:1.1px;text-decoration:underline;">1y</div>
<div class="t ct" id="z13" style="left:333px;top:176px;font-size:10px;font-weight:normal;color:#3a3a9a;letter-spacing:0px;text-decoration:underline;transform:scaleX(0.94);transform-origin:0 0;-webkit-text-stroke:0.22px #3a3a9a;">すべて</div>
<div class="t ct" id="d1" style="left:994.84px;top:177px;font-size:11px;font-weight:normal;color:#3a3a9a;letter-spacing:1.11px;;">2015/09/24 15:29</div>
<div class="t ct" id="d2" style="left:1108.05px;top:174px;font-size:11px;font-weight:normal;color:#3a3a9a;letter-spacing:-14.05px;;">-</div>
<div class="t ct" id="d3" style="left:1120.31px;top:177px;font-size:11px;font-weight:normal;color:#3a3a9a;letter-spacing:1.14px;;">2015/09/24 16:29</div>
<div class="t ct" id="d4" style="left:1226.8px;top:176px;font-size:11px;font-weight:normal;color:#3a3a9a;letter-spacing:0px;-webkit-text-stroke:0;transform:scaleX(1.09);transform-origin:0 0;-webkit-text-stroke:0.22px #3a3a9a;">(現在!)</div>
<div class="t ct" id="r0" style="left:19.1px;top:213px;font-size:11px;font-weight:bold;color:#5c5c8c;letter-spacing:1.24px;;">««</div>
<div class="t ct" id="r1" style="left:42.21px;top:216px;font-size:10px;font-weight:normal;color:#3a3a9a;letter-spacing:0.09px;text-decoration:underline;">1y</div>
<div class="t ct" id="r2" style="left:60.74px;top:217px;font-size:10px;font-weight:normal;color:#3a3a9a;letter-spacing:1.42px;text-decoration:underline;">6m</div>
<div class="t ct" id="r3" style="left:83.63px;top:217px;font-size:10px;font-weight:normal;color:#3a3a9a;letter-spacing:2.5px;text-decoration:underline;">1m</div>
<div class="t ct" id="r4" style="left:108.16px;top:217px;font-size:10px;font-weight:normal;color:#3a3a9a;letter-spacing:1.37px;text-decoration:underline;">7d</div>
<div class="t ct" id="r5" style="left:128.37px;top:217px;font-size:10px;font-weight:normal;color:#3a3a9a;letter-spacing:1.26px;text-decoration:underline;">1d</div>
<div class="t ct" id="r6" style="left:148.37px;top:217px;font-size:10px;font-weight:normal;color:#3a3a9a;letter-spacing:1.3px;text-decoration:underline;">12h</div>
<div class="t ct" id="r7" style="left:175px;top:217px;font-size:10px;font-weight:normal;color:#3a3a9a;letter-spacing:1.43px;text-decoration:underline;">1h</div>
<div class="t ct" id="r8" style="left:212.21px;top:217px;font-size:10px;font-weight:normal;color:#3a3a9a;letter-spacing:0.79px;text-decoration:underline;">1h</div>
<div class="t ct" id="r9" style="left:232px;top:217px;font-size:10px;font-weight:normal;color:#3a3a9a;letter-spacing:1.12px;text-decoration:underline;">12h</div>
<div class="t ct" id="r10" style="left:259px;top:217px;font-size:10px;font-weight:normal;color:#3a3a9a;letter-spacing:1.46px;text-decoration:underline;">1d</div>
<div class="t ct" id="r11" style="left:279.16px;top:217px;font-size:10px;font-weight:normal;color:#3a3a9a;letter-spacing:1.26px;text-decoration:underline;">7d</div>
<div class="t ct" id="r12" style="left:299px;top:217px;font-size:10px;font-weight:normal;color:#3a3a9a;letter-spacing:1.82px;text-decoration:underline;">1m</div>
<div class="t ct" id="r13" style="left:323px;top:217px;font-size:10px;font-weight:normal;color:#3a3a9a;letter-spacing:1.69px;text-decoration:underline;">6m</div>
<div class="t ct" id="r14" style="left:346.79px;top:217px;font-size:10px;font-weight:normal;color:#3a3a9a;letter-spacing:1.28px;text-decoration:underline;">1y</div>
<div class="t ct" id="r15" style="left:368.63px;top:214px;font-size:11px;font-weight:bold;color:#6a6a80;letter-spacing:0.97px;;">»»</div>
<div class="t ct" id="r16" style="left:1187.52px;top:216px;font-size:12px;font-weight:normal;color:#222;letter-spacing:1.33px;;">1h</div>
<div class="t ct" id="r17" style="left:1224.4px;top:216px;font-size:11px;font-weight:normal;color:#999;letter-spacing:0.89px;text-decoration:underline;">(fixed)</div>
<div class="t ct" id="f1" style="left:263.05px;top:657px;font-size:11px;font-weight:bold;color:#fff;letter-spacing:0.56px;;">Zabbix 2.4.6 Copyright 2001-2015 by Zabbix SIA</div>
<div class="t ct" id="f2" style="left:1135px;top:657px;font-size:10px;font-weight:bold;color:#fff;letter-spacing:0px;;transform:scaleX(1.07);transform-origin:0 0;-webkit-text-stroke:0.3px #fff;">ユーザー'Admin'でログイン</div>
<div class="a" style="left:1060px;top:13px;width:1px;height:10px;background:#9c5070"></div>
<div class="a" style="left:1111px;top:13px;width:1px;height:10px;background:#9c5070"></div>
<div class="a" style="left:1157px;top:13px;width:1px;height:10px;background:#9c5070"></div>
<div class="a" style="left:1224px;top:13px;width:1px;height:10px;background:#9c5070"></div>
<div class="a" style="left:84px;top:68px;width:1px;height:10px;background:#6a5aa0"></div>
<div class="a" style="left:127px;top:68px;width:1px;height:10px;background:#6a5aa0"></div>
<div class="a" style="left:174px;top:68px;width:1px;height:10px;background:#6a5aa0"></div>
<div class="a" style="left:248px;top:68px;width:1px;height:10px;background:#6a5aa0"></div>
<div class="a" style="left:305px;top:68px;width:1px;height:10px;background:#6a5aa0"></div>
<div class="a" style="left:362px;top:68px;width:1px;height:10px;background:#6a5aa0"></div>
<div class="a" style="left:411px;top:68px;width:1px;height:10px;background:#6a5aa0"></div>
<div class="a" style="left:480px;top:68px;width:1px;height:10px;background:#6a5aa0"></div>
<div class="a" style="left:529px;top:68px;width:1px;height:10px;background:#6a5aa0"></div>
<div class="a" style="left:607px;top:68px;width:1px;height:10px;background:#6a5aa0"></div>
<div class="a" style="left:1118px;top:657px;width:1px;height:10px;background:#6a6aa0"></div>
<div class="a" style="left:200px;top:217px;width:1px;height:8px;background:#555555"></div>
<svg class="a" style="left:151.6px;top:90px" width="9" height="8" viewBox="0 0 9 8"><path d="M0.8 1L3.6 3.8L0.8 6.6M4.3 1L7.1 3.8L4.3 6.6" fill="none" stroke="#111" stroke-width="1.5"/></svg>
<svg class="a" style="left:222.4px;top:90px" width="9" height="8" viewBox="0 0 9 8"><path d="M0.8 1L3.6 3.8L0.8 6.6M4.3 1L7.1 3.8L4.3 6.6" fill="none" stroke="#111" stroke-width="1.5"/></svg>
<svg class="a" style="left:299.7px;top:90px" width="9" height="8" viewBox="0 0 9 8"><path d="M0.8 1L3.6 3.8L0.8 6.6M4.3 1L7.1 3.8L4.3 6.6" fill="none" stroke="#111" stroke-width="1.5"/></svg>
<svg class="a" style="left:336.7px;top:90px" width="9" height="8" viewBox="0 0 9 8"><path d="M0.8 1L3.6 3.8L0.8 6.6M4.3 1L7.1 3.8L4.3 6.6" fill="none" stroke="#111" stroke-width="1.5"/></svg>
</body>
</html>
